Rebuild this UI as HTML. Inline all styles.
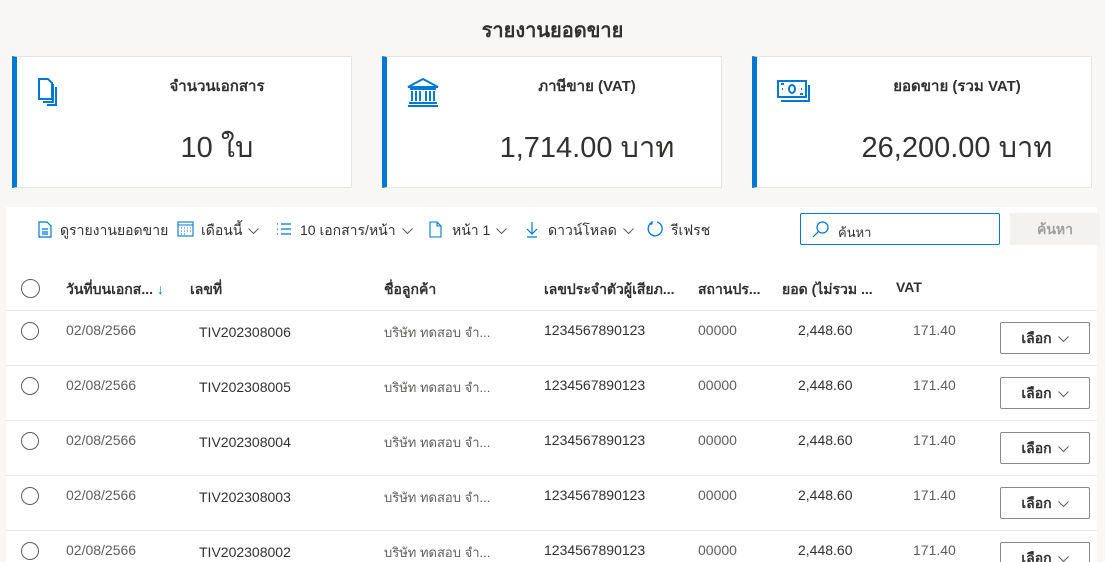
<!DOCTYPE html>
<html><head><meta charset="utf-8"><style>
*{box-sizing:border-box;margin:0;padding:0}
html,body{width:1105px;height:562px;overflow:hidden}
body{background:#f8f7f5;font-family:"Liberation Sans","Noto Sans CJK SC",sans-serif;color:#323130;position:relative}
.abs{position:absolute;white-space:nowrap}
h1{position:absolute;top:14px;left:0;width:1105px;text-align:center;font-size:20px;font-weight:bold;color:#323130}
.card{position:absolute;top:56px;width:340px;height:132px;background:#fff;border:1px solid #e5e5e5;border-left:5px solid #0078d4}
.card .t{position:absolute;top:17px;left:0;width:100%;text-align:center;font-size:15px;font-weight:bold;padding-left:66px}
.card .v{position:absolute;top:67px;left:0;width:100%;text-align:center;font-size:29px;padding-left:66px;color:#323130}
.card svg{position:absolute;left:20px;top:20px}
.panel{position:absolute;left:6px;top:207px;width:1091px;height:355px;background:#fff}
.tb{font-size:14px;color:#323130;top:220px}
.hd{font-size:14px;font-weight:bold;top:279px}
.rd{position:absolute;width:18px;height:18px;border:1px solid #605e5c;border-radius:50%}
.sep{position:absolute;left:6px;width:1091px;height:1px;background:#edebe9}
.c{font-size:14px;color:#605e5c}
.btn{position:absolute;left:1000px;width:90px;height:32px;border:1px solid #8a8886;border-radius:2px;background:#fff;font-size:14px;font-weight:bold;text-align:center;line-height:30px}
.chev{display:inline-block;width:11px;height:7px;margin-left:6px;vertical-align:middle}
</style></head><body>
<svg width="0" height="0" style="position:absolute"><defs><symbol id="ch" viewBox="0 0 11 7"><path d="M0.5 0.5l5 5 5-5" fill="none" stroke="#605e5c" stroke-width="1"/></symbol></defs></svg>
<h1>รายงานยอดขาย</h1>

<div class="card" style="left:12px">
<svg width="30" height="30" viewBox="0 0 30 30" fill="none" stroke="#0078d4" stroke-width="2"><path d="M2 2h9l4 4v16H2z"/><path d="M16 7v18H6"/><path d="M19 10v18H10"/></svg>
<div class="t">จำนวนเอกสาร</div><div class="v">10 ใบ</div></div>

<div class="card" style="left:382px">
<svg width="32" height="30" viewBox="0 0 32 30" fill="none" stroke="#0078d4" stroke-width="2"><path d="M1 10L16 2l15 8z"/><path d="M3 12h26M5 14v10M9 14v10M13 14v10M19 14v10M23 14v10M27 14v10M2 26h28M1 29h30"/></svg>
<div class="t">ภาษีขาย (VAT)</div><div class="v">1,714.00 บาท</div></div>

<div class="card" style="left:752px">
<svg width="34" height="26" viewBox="0 0 34 26" fill="none" stroke="#0078d4" stroke-width="2" style="top:22px"><rect x="1" y="2" width="28" height="16"/><path d="M4 22h28V6"/><ellipse cx="15" cy="10" rx="3" ry="4"/><path d="M5 10h1M24 10h1M4 5h3M23 15h3"/></svg>
<div class="t">ยอดขาย (รวม VAT)</div><div class="v">26,200.00 บาท</div></div>

<div class="panel"></div>

<svg class="abs" style="left:38px;top:221px" width="14" height="17" viewBox="0 0 14 17" fill="none" stroke="#0078d4" stroke-width="1.2"><path d="M1 1h8l4 4v11H1z M4 8h6M4 11h6M4 13h6"/></svg>
<div class="abs tb" style="left:60px">ดูรายงานยอดขาย</div>
<svg class="abs" style="left:177px;top:221px" width="17" height="16" viewBox="0 0 17 16" fill="none" stroke="#0078d4" stroke-width="1.1"><rect x="1" y="1" width="15" height="14"/><path d="M1 4h15M4 7h1M7 7h1M10 7h1M13 7h1M4 10h1M7 10h1M10 10h1M13 10h1M4 13h1M7 13h1"/></svg>
<div class="abs tb" style="left:201px">เดือนนี้<svg class="chev"><use href="#ch"/></svg></div>
<svg class="abs" style="left:276px;top:222px" width="16" height="14" viewBox="0 0 16 14" fill="none" stroke="#0078d4" stroke-width="1.2"><path d="M1 2h1M1 7h1M1 12h1M5 2h10M5 7h10M5 12h10"/></svg>
<div class="abs tb" style="left:300px">10 เอกสาร/หน้า<svg class="chev"><use href="#ch"/></svg></div>
<svg class="abs" style="left:429px;top:221px" width="13" height="17" viewBox="0 0 13 17" fill="none" stroke="#0078d4" stroke-width="1.1"><path d="M1 1h7l4 4v11H1zM8 1v4h4"/></svg>
<div class="abs tb" style="left:452px">หน้า 1<svg class="chev"><use href="#ch"/></svg></div>
<svg class="abs" style="left:526px;top:221px" width="12" height="17" viewBox="0 0 12 17" fill="none" stroke="#0078d4" stroke-width="1.2"><path d="M6 1v12M1 8l5 5 5-5M1 16h10"/></svg>
<div class="abs tb" style="left:548px">ดาวน์โหลด<svg class="chev"><use href="#ch"/></svg></div>
<svg class="abs" style="left:646px;top:220px" width="18" height="18" viewBox="0 0 18 18" fill="none" stroke="#0078d4" stroke-width="1.3"><path d="M6 2.5A7 7 0 1 0 11 2"/><path d="M6 1v3H3"/></svg>
<div class="abs tb" style="left:671px">รีเฟรช</div>

<div class="abs" style="left:800px;top:213px;width:200px;height:32px;border:1px solid #0078d4;border-radius:2px;background:#fff"></div>
<svg class="abs" style="left:812px;top:221px" width="17" height="17" viewBox="0 0 17 17" fill="none" stroke="#0078d4" stroke-width="1.2"><circle cx="10.5" cy="6.5" r="5.5"/><path d="M6.5 10.5L1 16"/></svg>
<div class="abs" style="left:838px;top:222px;font-size:13px;color:#323130">ค้นหา</div>
<div class="abs" style="left:1010px;top:213px;width:90px;height:32px;background:#f3f2f1;color:#a19f9d;font-size:14px;font-weight:bold;text-align:center;line-height:32px">ค้นหา</div>

<div class="rd" style="left:21px;top:279px;width:19px;height:19px"></div>
<div class="abs hd" style="left:66px">วันที่บนเอกส... <span style="color:#0078d4;font-weight:normal">↓</span></div>
<div class="abs hd" style="left:190px">เลขที่</div>
<div class="abs hd" style="left:384px">ชื่อลูกค้า</div>
<div class="abs hd" style="left:544px">เลขประจำตัวผู้เสียภ...</div>
<div class="abs hd" style="left:698px">สถานปร...</div>
<div class="abs hd" style="left:782px">ยอด (ไม่รวม ...</div>
<div class="abs hd" style="left:896px">VAT</div>

<div class="sep" style="top:310px"></div>
<div class="sep" style="top:365px"></div>
<div class="sep" style="top:420px"></div>
<div class="sep" style="top:475px"></div>
<div class="sep" style="top:530px"></div>

<div class="rd" style="left:21px;top:322px"></div>
<div class="abs c" style="left:66px;top:322px">02/08/2566</div>
<div class="abs c" style="left:199px;top:324px;color:#323130">TIV202308006</div>
<div class="abs c" style="left:384px;top:322px;font-size:13px">บริษัท ทดสอบ จำ...</div>
<div class="abs c" style="left:544px;top:322px;color:#323130">1234567890123</div>
<div class="abs c" style="left:698px;top:322px">00000</div>
<div class="abs c" style="left:798px;top:322px;color:#323130">2,448.60</div>
<div class="abs c" style="left:913px;top:322px">171.40</div>
<div class="btn" style="top:322px">เลือก<svg class="chev"><use href="#ch"/></svg></div>

<div class="rd" style="left:21px;top:377px"></div>
<div class="abs c" style="left:66px;top:377px">02/08/2566</div>
<div class="abs c" style="left:199px;top:379px;color:#323130">TIV202308005</div>
<div class="abs c" style="left:384px;top:377px;font-size:13px">บริษัท ทดสอบ จำ...</div>
<div class="abs c" style="left:544px;top:377px;color:#323130">1234567890123</div>
<div class="abs c" style="left:698px;top:377px">00000</div>
<div class="abs c" style="left:798px;top:377px;color:#323130">2,448.60</div>
<div class="abs c" style="left:913px;top:377px">171.40</div>
<div class="btn" style="top:377px">เลือก<svg class="chev"><use href="#ch"/></svg></div>

<div class="rd" style="left:21px;top:432px"></div>
<div class="abs c" style="left:66px;top:432px">02/08/2566</div>
<div class="abs c" style="left:199px;top:434px;color:#323130">TIV202308004</div>
<div class="abs c" style="left:384px;top:432px;font-size:13px">บริษัท ทดสอบ จำ...</div>
<div class="abs c" style="left:544px;top:432px;color:#323130">1234567890123</div>
<div class="abs c" style="left:698px;top:432px">00000</div>
<div class="abs c" style="left:798px;top:432px;color:#323130">2,448.60</div>
<div class="abs c" style="left:913px;top:432px">171.40</div>
<div class="btn" style="top:432px">เลือก<svg class="chev"><use href="#ch"/></svg></div>

<div class="rd" style="left:21px;top:487px"></div>
<div class="abs c" style="left:66px;top:487px">02/08/2566</div>
<div class="abs c" style="left:199px;top:489px;color:#323130">TIV202308003</div>
<div class="abs c" style="left:384px;top:487px;font-size:13px">บริษัท ทดสอบ จำ...</div>
<div class="abs c" style="left:544px;top:487px;color:#323130">1234567890123</div>
<div class="abs c" style="left:698px;top:487px">00000</div>
<div class="abs c" style="left:798px;top:487px;color:#323130">2,448.60</div>
<div class="abs c" style="left:913px;top:487px">171.40</div>
<div class="btn" style="top:487px">เลือก<svg class="chev"><use href="#ch"/></svg></div>

<div class="rd" style="left:21px;top:542px"></div>
<div class="abs c" style="left:66px;top:542px">02/08/2566</div>
<div class="abs c" style="left:199px;top:544px;color:#323130">TIV202308002</div>
<div class="abs c" style="left:384px;top:542px;font-size:13px">บริษัท ทดสอบ จำ...</div>
<div class="abs c" style="left:544px;top:542px;color:#323130">1234567890123</div>
<div class="abs c" style="left:698px;top:542px">00000</div>
<div class="abs c" style="left:798px;top:542px;color:#323130">2,448.60</div>
<div class="abs c" style="left:913px;top:542px">171.40</div>
<div class="btn" style="top:542px">เลือก<svg class="chev"><use href="#ch"/></svg></div>
</body></html>
